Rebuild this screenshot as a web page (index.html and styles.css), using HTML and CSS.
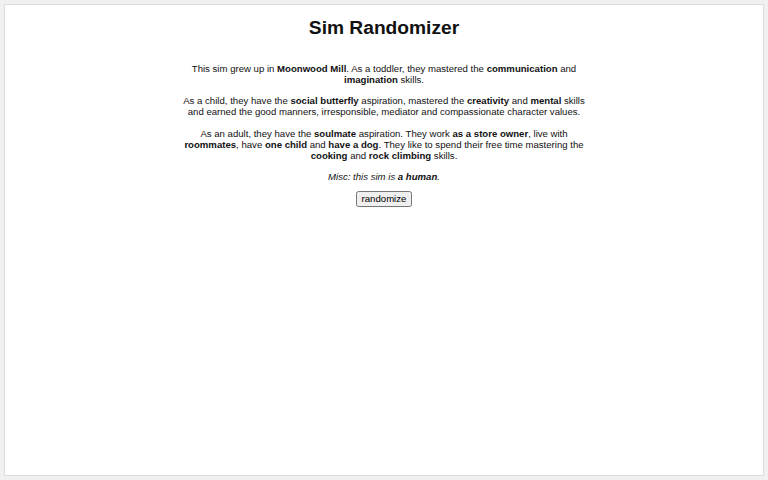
FILE: index.html
```html
<!DOCTYPE html>
<html lang="en">
<head>
    <meta charset="UTF-8">
    <meta name="viewport" content="width=device-width, initial-scale=1.0">
    <title>Sim Randomizer</title>
    <link rel="stylesheet" href="styles.css">
</head>
<body>
    <div class="container">
        <h1>Sim Randomizer</h1>
        <div id="sim-story">
            <p>This sim grew up in <b>Moonwood Mill</b>. As a toddler, they mastered the <b>communication</b> and <b>imagination</b> skills.</p>
            <p>As a child, they have the <b>social butterfly</b> aspiration, mastered the <b>creativity</b> and <b>mental</b> skills and earned the good manners, irresponsible, mediator and compassionate character values.</p>
            <p>As an adult, they have the <b>soulmate</b> aspiration. They work <b>as a store owner</b>, live with <b>roommates</b>, have <b>one child</b> and <b>have a dog</b>. They like to spend their free time mastering the <b>cooking</b> and <b>rock climbing</b> skills.</p>
            <p class="misc">Misc: this sim is <b>a human</b>.</p>
        </div>
        <button id="randomize">randomize</button>
    </div>
</body>
</html>
```

FILE: styles.css
```css
* {
    box-sizing: border-box;
}

body {
    margin: 0;
    padding: 4px;
    background-color: #f0f0f0;
    font-family: 'Liberation Sans', Arial, sans-serif;
    color: #111;
}

.container {
    height: 472px;
    background-color: #ffffff;
    border: 1px solid #dcdcdc;
    text-align: center;
    padding-top: 12px;
}

h1 {
    margin: 0 0 23.5px;
    font-size: 19.2px;
    line-height: 22px;
    font-weight: bold;
}

#sim-story {
    max-width: 402px;
    margin: 0 auto;
}

#sim-story p {
    margin: 0 0 10.5px;
    font-size: 9.6px;
    line-height: normal;
}

.misc {
    font-style: italic;
}

#randomize {
    display: block;
    margin: -1.5px auto 0;
    font-family: 'Liberation Sans', Arial, sans-serif;
    font-size: 9.6px;
    line-height: 11px;
    padding: 0 4px 1px;
}
```
